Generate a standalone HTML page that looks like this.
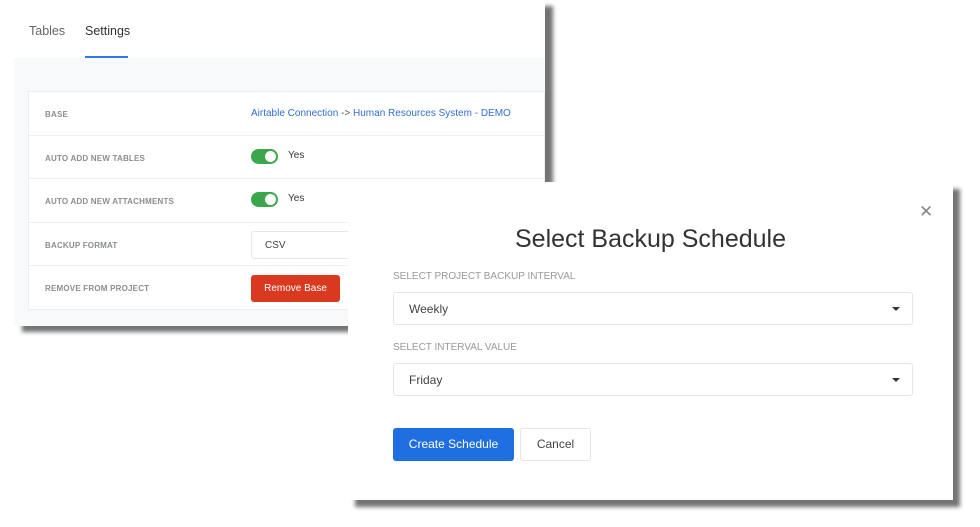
<!DOCTYPE html>
<html><head><style>
*{box-sizing:border-box;margin:0;padding:0}
body{width:980px;height:527px;background:#fff;position:relative;overflow:hidden;font-family:"Liberation Sans",Arial,sans-serif}
.back{position:absolute;left:14px;top:0;width:531px;height:326px;background:#fff;box-shadow:8px 6px 4px rgba(0,0,0,.55)}
.tabs{height:58px;position:relative;font-size:12.5px}
.tab1{position:absolute;left:15px;top:24px;color:#666}
.tab2{position:absolute;left:71px;top:24px;color:#333}
.ul{position:absolute;left:71px;top:56px;width:43px;height:2px;background:#2f7be0}
.gray{position:absolute;left:0;top:58px;width:531px;height:268px;background:#f8f9fb}
.card{position:absolute;left:14px;top:33px;width:517px;height:219px;background:#fff;border:1px solid #eceef1}
.row{height:43.6px;border-bottom:1px solid #eef0f2;position:relative}
.lab{position:absolute;left:16px;top:18px;font-size:8px;font-weight:bold;color:#8a8d91;letter-spacing:.2px}
.val{position:absolute;left:222px;top:16px;font-size:10px}
.link{color:#2f6fd6}
.tog{position:absolute;left:222px;top:13px;width:27px;height:15px;border-radius:8px;background:#3aa84a}
.tog:after{content:"";position:absolute;right:2px;top:2px;width:11px;height:11px;border-radius:50%;background:#fff}
.yes{position:absolute;left:259px;top:14px;font-size:10px;color:#333}
.inp{position:absolute;left:222px;top:8px;width:120px;height:28px;border:1px solid #e3e5e8;border-radius:3px;font-size:10px;color:#444;padding:8px 13px}
.rb{position:absolute;left:222px;top:9px;width:89px;height:27px;background:#d93a1f;border-radius:3px;color:#fff;font-size:10px;text-align:center;line-height:27px}
.modal{position:absolute;left:348px;top:182px;width:605px;height:318px;background:#fff;box-shadow:7px 7px 4px rgba(0,0,0,.55)}
.title{position:absolute;left:0;width:605px;top:43px;text-align:center;font-size:25px;color:#333}
.x{position:absolute;left:571px;top:20px;font-size:17px;color:#888}
.ml{position:absolute;left:45px;font-size:10px;color:#999}
.sel{position:absolute;left:45px;width:520px;height:33px;border:1px solid #e3e5e8;border-radius:3px;font-size:12px;color:#444;padding:9px 15px}
.sel:after{content:"";position:absolute;right:12px;top:14px;border-left:4px solid transparent;border-right:4px solid transparent;border-top:4px solid #333}
.cb{position:absolute;left:45px;top:246px;width:121px;height:33px;background:#1f6fe0;border-radius:3px;color:#fff;font-size:12px;text-align:center;line-height:33px}
.cc{position:absolute;left:172px;top:246px;width:71px;height:33px;border:1px solid #e3e5e8;border-radius:3px;color:#444;font-size:12px;text-align:center;line-height:31px}
</style></head><body>
<div class="back">
<div class="tabs"><span class="tab1">Tables</span><span class="tab2">Settings</span><div class="ul"></div></div>
<div class="gray"><div class="card">
<div class="row"><span class="lab">BASE</span><span class="val"><span class="link">Airtable Connection</span> <span style="color:#555">-&gt;</span> <span class="link">Human Resources System - DEMO</span></span></div>
<div class="row"><span class="lab">AUTO ADD NEW TABLES</span><div class="tog"></div><span class="yes">Yes</span></div>
<div class="row"><span class="lab">AUTO ADD NEW ATTACHMENTS</span><div class="tog"></div><span class="yes">Yes</span></div>
<div class="row"><span class="lab">BACKUP FORMAT</span><div class="inp">CSV</div></div>
<div class="row" style="border:0"><span class="lab">REMOVE FROM PROJECT</span><div class="rb">Remove Base</div></div>
</div></div>
</div>
<div class="modal">
<div class="x">✕</div>
<div class="title">Select Backup Schedule</div>
<div class="ml" style="top:89px">SELECT PROJECT BACKUP INTERVAL</div>
<div class="sel" style="top:110px">Weekly</div>
<div class="ml" style="top:160px">SELECT INTERVAL VALUE</div>
<div class="sel" style="top:181px">Friday</div>
<div class="cb">Create Schedule</div>
<div class="cc">Cancel</div>
</div>
</body></html>
